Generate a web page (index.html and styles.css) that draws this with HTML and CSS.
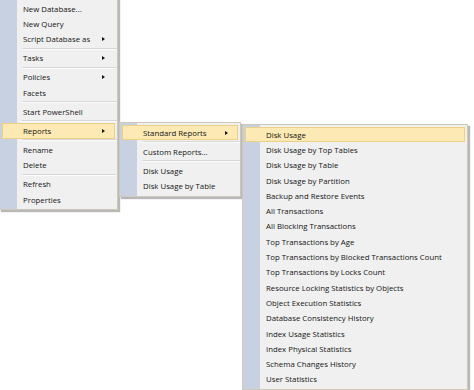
FILE: index.html
```html
<!DOCTYPE html>
<html>
<head>
<meta charset="utf-8">
<link rel="stylesheet" href="styles.css">
</head>
<body>
<div class="menu main">
  <div class="item">New Database...</div>
  <div class="item">New Query</div>
  <div class="item sub">Script Database as</div>
  <div class="sep"></div>
  <div class="item sub">Tasks</div>
  <div class="sep"></div>
  <div class="item sub">Policies</div>
  <div class="item">Facets</div>
  <div class="sep"></div>
  <div class="item">Start PowerShell</div>
  <div class="sep"></div>
  <div class="item sub active">Reports</div>
  <div class="sep"></div>
  <div class="item">Rename</div>
  <div class="item">Delete</div>
  <div class="sep"></div>
  <div class="item">Refresh</div>
  <div class="item">Properties</div>
</div>

<div class="menu reports">
  <div class="item sub active">Standard Reports</div>
  <div class="sep"></div>
  <div class="item">Custom Reports...</div>
  <div class="sep"></div>
  <div class="item">Disk Usage</div>
  <div class="item">Disk Usage by Table</div>
</div>

<div class="menu standard">
  <div class="item active">Disk Usage</div>
  <div class="item">Disk Usage by Top Tables</div>
  <div class="item">Disk Usage by Table</div>
  <div class="item">Disk Usage by Partition</div>
  <div class="item">Backup and Restore Events</div>
  <div class="item">All Transactions</div>
  <div class="item">All Blocking Transactions</div>
  <div class="item">Top Transactions by Age</div>
  <div class="item">Top Transactions by Blocked Transactions Count</div>
  <div class="item">Top Transactions by Locks Count</div>
  <div class="item">Resource Locking Statistics by Objects</div>
  <div class="item">Object Execution Statistics</div>
  <div class="item">Database Consistency History</div>
  <div class="item">Index Usage Statistics</div>
  <div class="item">Index Physical Statistics</div>
  <div class="item">Schema Changes History</div>
  <div class="item">User Statistics</div>
</div>
</body>
</html>
```
FILE: styles.css
```css
html, body {
  margin: 0;
  padding: 0;
  background: #ffffff;
  width: 474px;
  height: 390px;
  overflow: hidden;
  position: relative;
  font-family: "Open Sans", "Noto Sans", "Liberation Sans", sans-serif;
  font-size: 7.8px;
  color: #141414;
}

.menu {
  position: absolute;
  box-sizing: border-box;
  display: flex;
  flex-direction: column;
  padding: 2px 0;
  border: 1px solid #cfcab8;
  background: linear-gradient(to right, #c8d1e1 0, #c8d1e1 17px, #f0f0f0 17px);
  box-shadow: 2px 2px 1px rgba(0, 0, 0, 0.28);
}

.main {
  left: -1px;
  top: -2px;
  width: 119px;
}

.reports {
  left: 119px;
  top: 122px;
  width: 122px;
}

.standard {
  left: 242px;
  top: 124px;
  width: 226px;
}

.item {
  height: 15.3px;
  flex: none;
  box-sizing: border-box;
  margin: 0 2px;
  padding: 0 9px 0 20px;
  border: 1px solid transparent;
  display: flex;
  align-items: center;
  justify-content: space-between;
  white-space: nowrap;
}

.item.active {
  background: #fce9b3;
  border-color: #ecd184;
}

.item.sub::after {
  content: "";
  width: 0;
  height: 0;
  border-left: 3px solid #111;
  border-top: 2.5px solid transparent;
  border-bottom: 2.5px solid transparent;
}

.sep {
  flex: none;
  height: 1px;
  margin: 0.9px 0 0.9px 22px;
  background: #d7d7d7;
  border-bottom: 1px solid #fbfbfb;
}
```
